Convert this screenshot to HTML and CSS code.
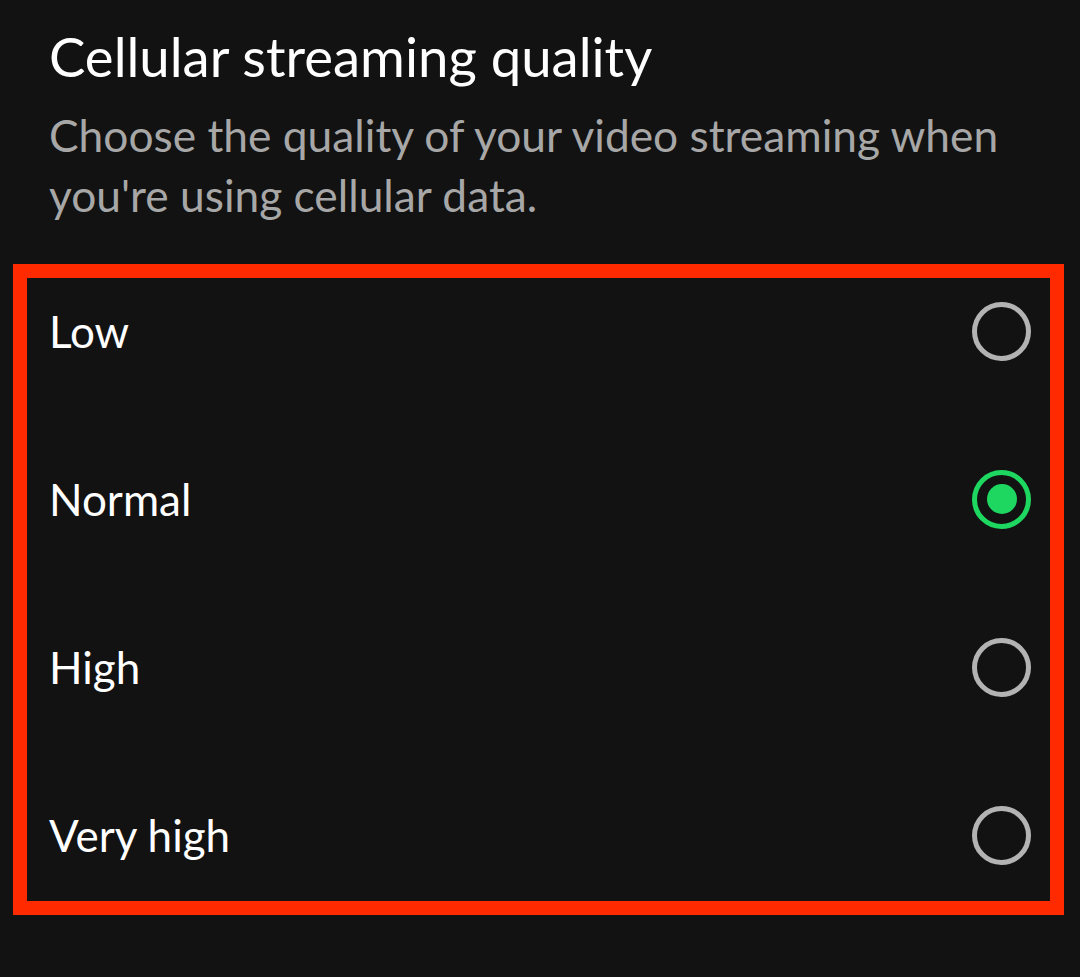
FILE: index.html
```html
<!DOCTYPE html>
<html lang="en">
<head>
    <meta charset="UTF-8">
    <meta name="viewport" content="width=device-width, initial-scale=1.0">
    <title>Cellular streaming quality</title>
    <link rel="stylesheet" href="styles.css">
</head>
<body>

    <div class="page">
        <header class="intro">
            <h1>Cellular streaming quality</h1>
            <p>Choose the quality of your video streaming when you're using cellular data.</p>
        </header>

        <ul class="options">
            <li class="option">
                <span class="label">Low</span>
                <span class="radio"></span>
            </li>
            <li class="option">
                <span class="label">Normal</span>
                <span class="radio checked"></span>
            </li>
            <li class="option">
                <span class="label">High</span>
                <span class="radio"></span>
            </li>
            <li class="option">
                <span class="label">Very high</span>
                <span class="radio"></span>
            </li>
        </ul>
    </div>

</body>
</html>
```

FILE: styles.css
```css
/* Reset */
* {
    margin: 0;
    padding: 0;
    box-sizing: border-box;
}

body {
    font-family: Lato, "Noto Sans", sans-serif;
    background-color: #121212;
    color: #fff;
    width: 1080px;
    height: 977px;
    overflow: hidden;
}

.page {
    padding: 24px 16px 0 13px;
}

.intro {
    padding: 0 36px;
}

.intro h1 {
    font-size: 54.5px;
    font-weight: 400;
    line-height: 64px;
}

.intro p {
    margin-top: 17px;
    font-size: 44.3px;
    line-height: 60px;
    color: #a7a7a7;
}

/* highlighted list of options */
.options {
    list-style: none;
    margin-top: 39px;
    border: 14px solid #ff2a00;
    display: flex;
    flex-direction: column;
    gap: 62px;
    padding: 0 19px 13px 22px;
}

.option {
    height: 106px;
    display: flex;
    align-items: center;
    justify-content: space-between;
}

.label {
    font-size: 44px;
}

.radio {
    width: 59px;
    height: 59px;
    border-radius: 50%;
    border: 5px solid #b3b3b3;
    display: flex;
    align-items: center;
    justify-content: center;
}

.radio.checked {
    border-color: #1ed760;
}

.radio.checked::after {
    content: "";
    width: 30px;
    height: 30px;
    border-radius: 50%;
    background-color: #1ed760;
}
```
